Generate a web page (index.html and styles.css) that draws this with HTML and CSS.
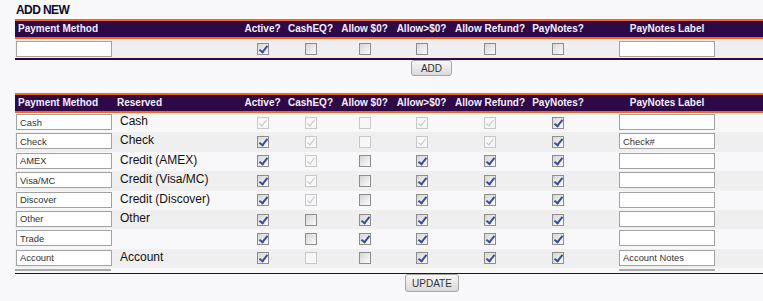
FILE: index.html
```html
<!DOCTYPE html>
<html lang="en">
<head>
  <meta charset="UTF-8" />
  <title>Payment Methods</title>
  <link rel="stylesheet" href="styles.css">
</head>
<body>
  <h3 class="title">ADD NEW</h3>

  <table class="grid grid-add">
    <colgroup>
      <col class="c-name"><col class="c-res"><col class="c-act"><col class="c-cash"><col class="c-zero">
      <col class="c-pos"><col class="c-ref"><col class="c-notes"><col class="c-label"><col class="c-fill">
    </colgroup>
    <thead>
      <tr>
        <th class="left">Payment Method</th><th></th><th>Active?</th><th>CashEQ?</th><th>Allow $0?</th>
        <th>Allow&gt;$0?</th><th>Allow Refund?</th><th>PayNotes?</th><th>PayNotes Label</th><th></th>
      </tr>
    </thead>
    <tbody>
      <tr>
        <td class="name"><input type="text" value=""></td><td></td>
        <td><span class="cb on"></span></td><td><span class="cb"></span></td><td><span class="cb"></span></td>
        <td><span class="cb"></span></td><td><span class="cb"></span></td><td><span class="cb"></span></td>
        <td class="label"><input type="text" value=""></td><td></td>
      </tr>
    </tbody>
  </table>
  <div class="actions actions-add"><button class="btn btn-add">ADD</button></div>

  <table class="grid grid-list">
    <colgroup>
      <col class="c-name"><col class="c-res"><col class="c-act"><col class="c-cash"><col class="c-zero">
      <col class="c-pos"><col class="c-ref"><col class="c-notes"><col class="c-label"><col class="c-fill">
    </colgroup>
    <thead>
      <tr>
        <th class="left">Payment Method</th><th class="left">Reserved</th><th>Active?</th><th>CashEQ?</th><th>Allow $0?</th>
        <th>Allow&gt;$0?</th><th>Allow Refund?</th><th>PayNotes?</th><th>PayNotes Label</th><th></th>
      </tr>
    </thead>
    <tbody>
      <tr>
        <td class="name"><input type="text" value="Cash"></td><td class="res">Cash</td>
        <td><span class="cb on dis"></span></td><td><span class="cb on dis"></span></td><td><span class="cb dis"></span></td>
        <td><span class="cb on dis"></span></td><td><span class="cb on dis"></span></td><td><span class="cb on"></span></td>
        <td class="label"><input type="text" value=""></td><td></td>
      </tr>
      <tr>
        <td class="name"><input type="text" value="Check"></td><td class="res">Check</td>
        <td><span class="cb on"></span></td><td><span class="cb on dis"></span></td><td><span class="cb dis"></span></td>
        <td><span class="cb on dis"></span></td><td><span class="cb on dis"></span></td><td><span class="cb on"></span></td>
        <td class="label"><input type="text" value="Check#"></td><td></td>
      </tr>
      <tr>
        <td class="name"><input type="text" value="AMEX"></td><td class="res">Credit (AMEX)</td>
        <td><span class="cb on"></span></td><td><span class="cb on dis"></span></td><td><span class="cb"></span></td>
        <td><span class="cb on"></span></td><td><span class="cb on"></span></td><td><span class="cb on"></span></td>
        <td class="label"><input type="text" value=""></td><td></td>
      </tr>
      <tr>
        <td class="name"><input type="text" value="Visa/MC"></td><td class="res">Credit (Visa/MC)</td>
        <td><span class="cb on"></span></td><td><span class="cb on dis"></span></td><td><span class="cb"></span></td>
        <td><span class="cb on"></span></td><td><span class="cb on"></span></td><td><span class="cb on"></span></td>
        <td class="label"><input type="text" value=""></td><td></td>
      </tr>
      <tr>
        <td class="name"><input type="text" value="Discover"></td><td class="res">Credit (Discover)</td>
        <td><span class="cb on"></span></td><td><span class="cb on dis"></span></td><td><span class="cb"></span></td>
        <td><span class="cb on"></span></td><td><span class="cb on"></span></td><td><span class="cb on"></span></td>
        <td class="label"><input type="text" value=""></td><td></td>
      </tr>
      <tr>
        <td class="name"><input type="text" value="Other"></td><td class="res">Other</td>
        <td><span class="cb on"></span></td><td><span class="cb"></span></td><td><span class="cb on"></span></td>
        <td><span class="cb on"></span></td><td><span class="cb on"></span></td><td><span class="cb on"></span></td>
        <td class="label"><input type="text" value=""></td><td></td>
      </tr>
      <tr>
        <td class="name"><input type="text" value="Trade"></td><td class="res"></td>
        <td><span class="cb on"></span></td><td><span class="cb"></span></td><td><span class="cb on"></span></td>
        <td><span class="cb on"></span></td><td><span class="cb on"></span></td><td><span class="cb on"></span></td>
        <td class="label"><input type="text" value=""></td><td></td>
      </tr>
      <tr>
        <td class="name"><input type="text" value="Account"></td><td class="res">Account</td>
        <td><span class="cb on"></span></td><td><span class="cb dis"></span></td><td><span class="cb"></span></td>
        <td><span class="cb on"></span></td><td><span class="cb on"></span></td><td><span class="cb on"></span></td>
        <td class="label"><input type="text" value="Account Notes"></td><td></td>
      </tr>
      <tr class="stub">
        <td class="name"><div class="stub-bar"></div></td><td></td><td></td><td></td><td></td>
        <td></td><td></td><td></td><td class="label"><div class="stub-bar"></div></td><td></td>
      </tr>
    </tbody>
  </table>
  <div class="actions actions-update"><button class="btn btn-update">UPDATE</button></div>
</body>
</html>
```

FILE: styles.css
```css
body {
  margin: 0;
  padding: 0 0 0 15px;
  background-color: #f8f8fa;
  font-family: 'Liberation Sans', Arial, sans-serif;
  color: #111;
  overflow: hidden;
}

.title {
  margin: 0;
  padding: 2px 0 0 1px;
  font-size: 12px;
  line-height: 17px;
  letter-spacing: -0.6px;
  color: #0c0c2a;
}

.grid {
  width: 748px;
  table-layout: fixed;
  border-collapse: separate;
  border-spacing: 0;
}

.c-name { width: 99px; }
.c-res { width: 124px; }
.c-act { width: 49px; }
.c-cash { width: 47px; }
.c-zero { width: 61px; }
.c-pos { width: 53px; }
.c-ref { width: 84px; }
.c-notes { width: 52px; }
.c-label { width: 166px; }
.c-fill { width: 13px; }

.grid th {
  height: 16px;
  padding: 0;
  background: #2f0848;
  border-top: 2px solid #f26522;
  border-bottom: 2px solid #f26522;
  color: #f4f0ff;
  font-size: 10px;
  font-weight: bold;
  line-height: 16px;
  text-align: center;
  white-space: nowrap;
}

.grid th.left {
  text-align: left;
  padding-left: 3px;
}

.grid td {
  padding: 0;
  text-align: center;
  vertical-align: middle;
}

.grid-add {
  border-bottom: 2px solid #2f0848;
}

.grid-add tbody tr {
  background: #efefef;
}

.grid-add td {
  height: 19px;
}

.grid-add td.name,
.grid-add td.label {
  vertical-align: top;
  padding-top: 2px;
  height: 17px;
}

.grid-list {
  margin-top: 17px;
  border-bottom: 1px solid #2f0848;
}

.grid-list td {
  height: 19.4px;
}

.grid-list tbody tr:nth-child(even) {
  background: #efefef;
}

.grid-list td.name,
.grid-list td.label {
  vertical-align: top;
  padding-top: 1px;
  height: 18.4px;
}

.grid td.name {
  text-align: left;
  padding-left: 1px;
}

.grid td.res {
  text-align: left;
  vertical-align: top;
  padding: 1px 0 0 6px;
  height: 18.4px;
  font-size: 12px;
  line-height: 14px;
  color: #111;
  white-space: nowrap;
}

.grid input {
  display: block;
  box-sizing: border-box;
  width: 96px;
  height: 16px;
  margin: 0;
  padding: 0 3px;
  border: 1px solid #a2a2a2;
  background: #fff;
  font-family: 'Liberation Sans', Arial, sans-serif;
  font-size: 9.4px;
  color: #333;
  outline: none;
}

.grid td.label input {
  margin: 0 auto;
}

.grid-list tr.stub td {
  height: 5px;
  padding: 0;
  vertical-align: top;
}

.stub-bar {
  width: 96px;
  height: 2px;
  margin-top: 1px;
  background: #aaa;
}

.grid td.label .stub-bar {
  margin: 1px auto 0;
}

/* checkboxes */
.cb {
  display: block;
  position: relative;
  box-sizing: border-box;
  width: 12px;
  height: 12px;
  margin: 0 auto;
  border: 1px solid #8d8d8d;
  background: linear-gradient(135deg, #d6d6d6, #fbfbfb);
}

.cb.on::after {
  content: "";
  position: absolute;
  left: 3px;
  top: 0;
  width: 3px;
  height: 7px;
  border: solid #3b4c9c;
  border-width: 0 2px 2px 0;
  transform: rotate(38deg);
}

.cb.dis {
  border-color: #c8c8c8;
  background: #f7f7f7;
}

.cb.dis.on::after {
  border-color: #c6c6c6;
  border-width: 0 1px 1px 0;
}

.actions {
  display: flex;
}

.actions-add {
  padding-left: 396px;
}

.actions-update {
  padding-left: 390px;
}

.btn {
  box-sizing: border-box;
  margin: 0;
  padding: 0;
  border: 1px solid #a6a6a6;
  border-radius: 3px;
  background: linear-gradient(#f7f7f7, #dadada);
  font-family: 'Liberation Sans', Arial, sans-serif;
  font-size: 10px;
  color: #333;
}

.btn-add {
  width: 41px;
  height: 16px;
}

.btn-update {
  width: 54px;
  height: 18px;
}
```
